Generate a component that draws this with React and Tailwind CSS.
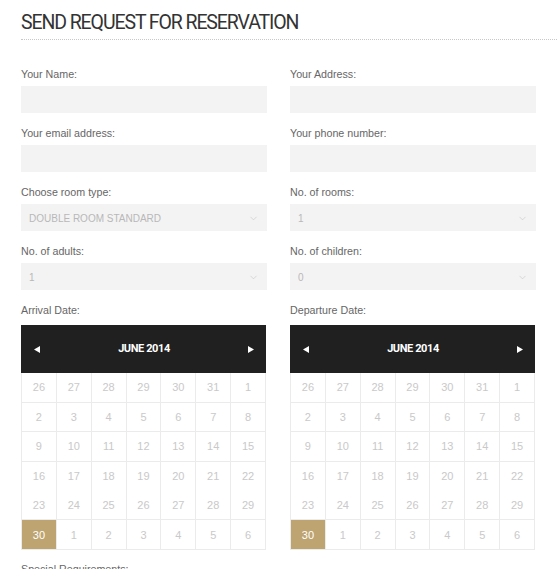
import { ChevronDown } from 'lucide-react';

const weeks = [
  [26, 27, 28, 29, 30, 31, 1],
  [2, 3, 4, 5, 6, 7, 8],
  [9, 10, 11, 12, 13, 14, 15],
  [16, 17, 18, 19, 20, 21, 22],
  [23, 24, 25, 26, 27, 28, 29],
  [30, 1, 2, 3, 4, 5, 6],
];

function Field({ label, children }) {
  return (
    <div>
      <label className="block text-[10.7px] leading-[13px] text-[#666] mb-[5px]">{label}</label>
      {children}
    </div>
  );
}

function TextBox() {
  return <input type="text" className="block w-full h-[27px] bg-[#f3f3f3] outline-none px-2 text-[11px]" />;
}

function SelectBox({ value }) {
  return (
    <div className="relative h-[27px] bg-[#f3f3f3] flex items-center pl-[8px] pt-[1px]">
      <span className="text-[#b8b8b8] text-[10px]">{value}</span>
      <ChevronDown size={11} strokeWidth={1.3} className="absolute right-[8px] top-[9px] text-[#c4c4c4]" />
    </div>
  );
}

function Calendar() {
  return (
    <div className="w-[245px]">
      <div className="h-[48px] bg-[#202020] flex items-center justify-between pl-[13px] pr-[12px]">
        <svg width="6" height="7" viewBox="0 0 6 7">
          <polygon points="6,0 6,7 0,3.5" fill="#fff" />
        </svg>
        <span className="text-white text-[11px] font-bold tracking-[-0.4px] font-['Roboto',sans-serif] pt-[1px]">JUNE 2014</span>
        <svg width="6" height="7" viewBox="0 0 6 7">
          <polygon points="0,0 0,7 6,3.5" fill="#fff" />
        </svg>
      </div>
      <div className="border-l border-[#ebebeb]">
        {weeks.map((week, wi) => (
          <div key={wi} className={`grid grid-cols-7 ${wi === 3 ? '' : 'border-b border-[#ebebeb]'}`}>
            {week.map((d, di) => {
              const selected = wi === 5 && di === 0;
              return (
                <div
                  key={di}
                  className={`h-[28.7px] flex items-center justify-center border-r border-[#ebebeb] text-[11px] ${
                    selected ? 'bg-[#bea470] text-white' : 'text-[#c9c9c9]'
                  }`}
                >
                  {d}
                </div>
              );
            })}
          </div>
        ))}
      </div>
    </div>
  );
}

export default function App() {
  return (
    <div className="w-[557px] h-[569px] overflow-hidden bg-white pl-[21px] font-['Liberation_Sans',Arial,sans-serif]">
      <h2 className="pt-[11px] text-[19.5px] leading-[24px] text-[#333] font-['Roboto',sans-serif] tracking-[-1.1px]">
        SEND REQUEST FOR RESERVATION
      </h2>
      <div className="mt-[4px] border-b border-dotted border-[#c8c8c8]" />

      <div className="w-[515px] mt-[28px] grid grid-cols-2 gap-x-[23px] gap-y-[14px]">
        <Field label="Your Name:"><TextBox /></Field>
        <Field label="Your Address:"><TextBox /></Field>
        <Field label="Your email address:"><TextBox /></Field>
        <Field label="Your phone number:"><TextBox /></Field>
        <Field label="Choose room type:"><SelectBox value="DOUBLE ROOM STANDARD" /></Field>
        <Field label="No. of rooms:"><SelectBox value="1" /></Field>
        <Field label="No. of adults:"><SelectBox value="1" /></Field>
        <Field label="No. of children:"><SelectBox value="0" /></Field>
        <div>
          <label className="block text-[10.7px] leading-[13px] text-[#666] mb-[8px]">Arrival Date:</label>
          <Calendar />
        </div>
        <div>
          <label className="block text-[10.7px] leading-[13px] text-[#666] mb-[8px]">Departure Date:</label>
          <Calendar />
        </div>
        <div className="col-span-2 -mt-[1px]">
          <label className="block text-[10.7px] leading-[13px] text-[#666]">Special Requirements:</label>
        </div>
      </div>
    </div>
  );
}
